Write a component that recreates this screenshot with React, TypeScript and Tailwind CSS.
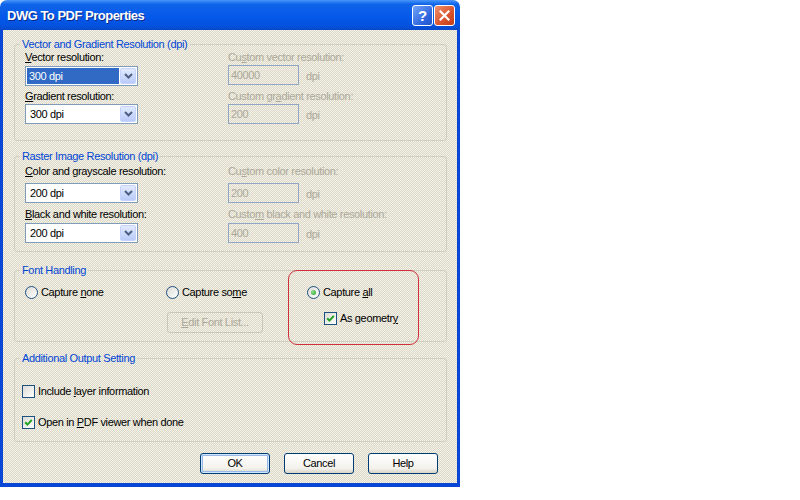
import React from "react";

const U = ({ children }: { children: React.ReactNode }) => (
  <span className="underline underline-offset-[1px] decoration-[1px]">{children}</span>
);

function Combo({ value, selected }: { value: string; selected?: boolean }) {
  return (
    <div className="flex h-[20px] w-[113px] items-stretch border border-[#7f9db9] bg-white p-[1px]">
      <div className="mr-[1px] flex flex-1 items-stretch">
        <span
          className={
            selected
              ? "flex w-full items-center bg-[#316ac5] pl-[2px] text-white"
              : "flex w-full items-center pl-[3px] text-black"
          }
        >
          {value}
        </span>
      </div>
      <div className="flex w-[16px] items-center justify-center rounded-[2px] border border-[#c3d3fd] bg-[linear-gradient(to_bottom,#e2eafe,#b9cbf7)]">
        <svg width="9" height="6" viewBox="0 0 9 6">
          <path d="M1 1 L4.5 4.5 L8 1" stroke="#4d6185" strokeWidth="2" fill="none" />
        </svg>
      </div>
    </div>
  );
}

function DisabledInput({ value }: { value: string }) {
  return (
    <div className="flex items-center">
      <div className="flex h-[20px] w-[71px] items-center border border-[#8fa7c4] pl-[2px] text-[#aca899]">
        {value}
      </div>
      <span className="ml-[7px] pt-[2px] text-[#aca899]">dpi</span>
    </div>
  );
}

function Radio({ checked }: { checked?: boolean }) {
  return (
    <span className="inline-flex h-[13px] w-[13px] shrink-0 items-center justify-center rounded-full border border-[#1c5180] bg-[linear-gradient(135deg,#dcdbd5,#ffffff)]">
      {checked && (
        <span className="h-[5px] w-[5px] rounded-full bg-[radial-gradient(circle_at_35%_35%,#8ee08e,#21a121)]" />
      )}
    </span>
  );
}

function Check({ checked }: { checked?: boolean }) {
  return (
    <span className="inline-flex h-[13px] w-[13px] shrink-0 items-center justify-center border border-[#1c5180] bg-[linear-gradient(135deg,#dcdbd5,#ffffff)]">
      {checked && (
        <svg width="9" height="9" viewBox="0 0 9 9">
          <path d="M1.2 4.2 L3.5 6.6 L7.8 1.8" stroke="#21a121" strokeWidth="2" fill="none" />
        </svg>
      )}
    </span>
  );
}

function Btn({ label, def }: { label: React.ReactNode; def?: boolean }) {
  return (
    <div
      className={
        "flex h-[21px] w-[70px] items-center justify-center rounded-[3px] border border-[#003c74] bg-[linear-gradient(to_bottom,#ffffff,#f3f2ec_75%,#d8d3c6)] " +
        (def ? "shadow-[inset_0_0_0_1px_#cee7ff,inset_0_0_0_2px_#98b8ea]" : "")
      }
    >
      {label}
    </div>
  );
}

function Group({
  title,
  className,
  children,
}: {
  title: string;
  className: string;
  children: React.ReactNode;
}) {
  return (
    <fieldset className={"ml-[11px] mr-[10px] rounded-[3px] border border-[#d0d0bf] " + className}>
      <legend className="ml-[5px] px-[2px] leading-[13px] text-[#0046d5]">{title}</legend>
      {children}
    </fieldset>
  );
}

export default function App() {
  return (
    <div className="relative h-[500px] w-[800px] bg-white font-['Liberation_Sans',Arial,sans-serif] text-[11px] leading-[13px] tracking-[-0.35px] text-black">
      <div className="flex h-[487px] w-[460px] flex-col">
        {/* Title bar */}
        <div className="flex h-[30px] items-center rounded-t-[7px] bg-[linear-gradient(to_bottom,#4896fa_0%,#1064e8_14%,#0559ea_55%,#0352e0_85%,#0a48c8_100%)] pl-[7px] pr-[5px]">
          <span className="flex-1 text-[13px] font-bold tracking-[-0.5px] text-white [text-shadow:1px_1px_0_#0a2a8a]">
            DWG To PDF Properties
          </span>
          <div className="flex gap-[1px]">
            <div className="flex h-[21px] w-[21px] items-center justify-center rounded-[3px] border border-white bg-[linear-gradient(135deg,#74a4fa,#2b63dc_70%,#2255cc)] text-[15px] font-bold text-white">
              ?
            </div>
            <div className="flex h-[21px] w-[21px] items-center justify-center rounded-[3px] border border-white bg-[linear-gradient(135deg,#f0906c,#d9532c_60%,#c03d18)]">
              <svg width="11" height="11" viewBox="0 0 11 11">
                <path d="M1.5 1.5 L9.5 9.5 M9.5 1.5 L1.5 9.5" stroke="white" strokeWidth="2.2" strokeLinecap="square" />
              </svg>
            </div>
          </div>
        </div>

        {/* Body */}
        <div className="flex flex-1 flex-col border-x-[3px] border-b-[4px] border-[#0846d6] bg-[image:repeating-conic-gradient(#f4f2e9_0%_25%,#dbd8c7_0%_50%)] bg-[length:2px_2px]">
          <Group title="Vector and Gradient Resolution (dpi)" className="mt-[8px]">
            <div className="grid grid-cols-[203px_1fr] pb-[16px] pl-[10px]">
              <div className="flex flex-col">
                <span>
                  <U>V</U>ector resolution:
                </span>
                <div className="mt-[2px]">
                  <Combo value="300 dpi" selected />
                </div>
                <span className="mt-[4px]">
                  <U>G</U>radient resolution:
                </span>
                <div className="mt-[1px]">
                  <Combo value="300 dpi" />
                </div>
              </div>
              <div className="flex flex-col text-[#aca899]">
                <span>
                  Cu<U>s</U>tom vector resolution:
                </span>
                <div className="mt-[1px]">
                  <DisabledInput value="40000" />
                </div>
                <span className="mt-[5px]">
                  Custom gr<U>a</U>dient resolution:
                </span>
                <div className="mt-[1px]">
                  <DisabledInput value="200" />
                </div>
              </div>
            </div>
          </Group>

          <Group title="Raster Image Resolution (dpi)" className="mt-[9px]">
            <div className="grid grid-cols-[203px_1fr] pb-[8px] pl-[10px] pt-[2px]">
              <div className="flex flex-col">
                <span>
                  <U>C</U>olor and grayscale resolution:
                </span>
                <div className="mt-[5px]">
                  <Combo value="200 dpi" />
                </div>
                <span className="mt-[5px]">
                  <U>B</U>lack and white resolution:
                </span>
                <div className="mt-[2px]">
                  <Combo value="200 dpi" />
                </div>
              </div>
              <div className="flex flex-col text-[#aca899]">
                <span>
                  Cu<U>s</U>tom color resolution:
                </span>
                <div className="mt-[5px]">
                  <DisabledInput value="200" />
                </div>
                <span className="mt-[5px]">
                  Custo<U>m</U> black and white resolution:
                </span>
                <div className="mt-[2px]">
                  <DisabledInput value="400" />
                </div>
              </div>
            </div>
          </Group>

          <Group title="Font Handling" className="mt-[12px]">
            <div className="grid grid-cols-[141px_141px_1fr] items-start pb-[8px] pl-[10px] pt-[9px]">
              <div className="flex items-center gap-[3px]">
                <Radio />
                <span>
                  Capture <U>n</U>one
                </span>
              </div>
              <div className="flex items-center gap-[3px]">
                <Radio />
                <span>
                  Capture so<U>m</U>e
                </span>
              </div>
              <div className="flex items-center gap-[3px]">
                <Radio checked />
                <span>
                  Capture <U>a</U>ll
                </span>
              </div>
              <div />
              <div className="mt-[13px] ml-[1px] flex h-[21px] w-[96px] items-center justify-center rounded-[3px] border border-[#c9c7ba] text-[#aca899]">
                <span>
                  <U>E</U>dit Font List...
                </span>
              </div>
              <div className="mt-[13px] ml-[17px] flex items-center gap-[3px]">
                <Check checked />
                <span>
                  As geometr<U>y</U>
                </span>
              </div>
            </div>
          </Group>

          <Group title="Additional Output Setting" className="mt-[10px]">
            <div className="flex flex-col pb-[12px] pl-[7px] pt-[20px]">
              <div className="flex items-center gap-[3px]">
                <Check />
                <span>
                  Include <U>l</U>ayer information
                </span>
              </div>
              <div className="mt-[18px] flex items-center gap-[3px]">
                <Check checked />
                <span>
                  Open in <U>P</U>DF viewer when done
                </span>
              </div>
            </div>
          </Group>

          <div className="mt-[11px] flex justify-end gap-[14px] pr-[19px]">
            <Btn label="OK" def />
            <Btn label="Cancel" />
            <Btn label="Help" />
          </div>
        </div>
      </div>

      {/* red annotation */}
      <div className="absolute left-[288px] top-[270px] h-[75px] w-[131px] rounded-[9px] border border-[#d0303c]" />
    </div>
  );
}
